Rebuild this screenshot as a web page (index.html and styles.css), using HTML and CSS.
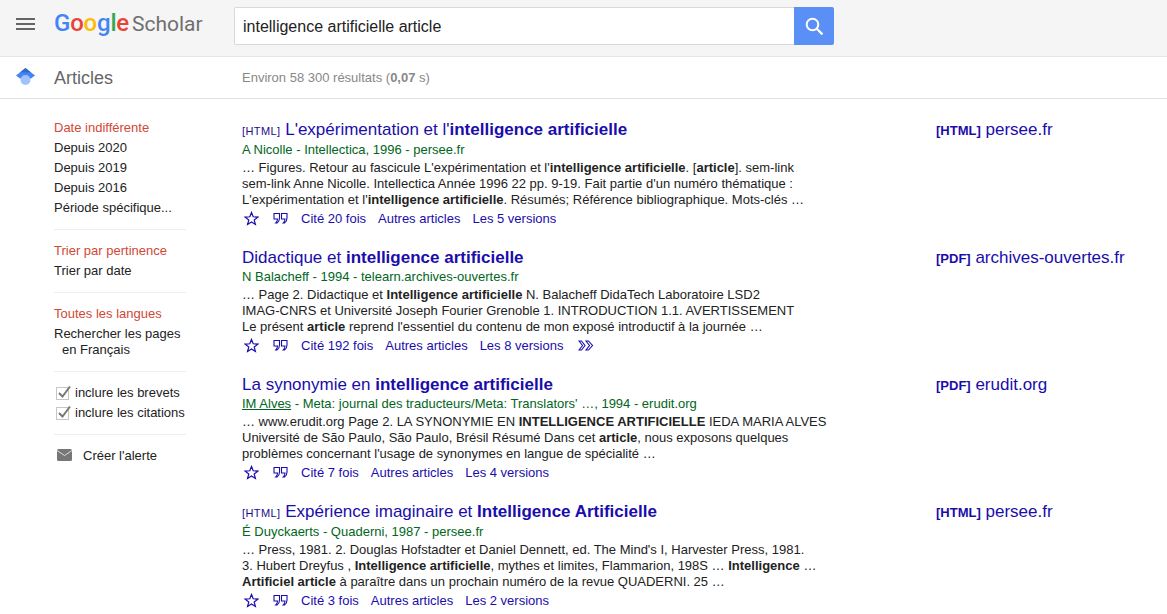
FILE: index.html
```html
<!DOCTYPE html>
<html lang="fr">
<head>
<meta charset="utf-8">
<title>Google Scholar</title>
<link rel="stylesheet" href="styles.css">
</head>
<body>
<header class="topbar">
  <div class="burger"><span></span><span></span><span></span></div>
  <div class="logo"><span class="logo-g"><span class="c-b">G</span><span class="c-r">o</span><span class="c-y">o</span><span class="c-b">g</span><span class="c-g">l</span><span class="c-r">e</span></span><span class="logo-s">Scholar</span></div>
  <form class="search">
    <input class="search-input" type="text" value="intelligence artificielle article">
    <button class="search-btn" type="button" aria-label="Rechercher">
      <svg width="21" height="21" viewBox="0 0 21 21"><circle cx="8.500" cy="8.500" r="5.800" fill="none" stroke="#fff" stroke-width="2"/><path d="M12.800 12.800l5.600 5.600" stroke="#fff" stroke-width="2.200" fill="none"/></svg>
    </button>
  </form>
</header>
<div class="subbar">
  <svg class="cap" width="19" height="20" viewBox="0 0 19 20"><path d="M9.500 1L19 8.500l-4 3H4l-4-3z" fill="#4285f4"/><path d="M9.500 1l5.500 4.500H4z" fill="#356ac3"/><circle cx="9.500" cy="13" r="5" fill="#a1c2fa"/></svg>
  <div class="sub-title">Articles</div>
  <div class="stats">Environ 58 300 résultats (<b>0,07</b> s)</div>
</div>
<main class="page">
  <nav class="side">
    <ul class="group">
      <li class="sel">Date indifférente</li><li>Depuis 2020</li><li>Depuis 2019</li><li>Depuis 2016</li><li>Période spécifique...</li>
    </ul>
    <ul class="group">
      <li class="sel">Trier par pertinence</li><li>Trier par date</li>
    </ul>
    <ul class="group">
      <li class="sel">Toutes les langues</li><li class="wrap">Rechercher les pages<br><span class="indent">en Français</span></li>
    </ul>
    <ul class="group checks">
      <li><span class="box"><svg width="16" height="16" viewBox="0 0 16 16"><path d="M3 8l3.500 3.500L14 1.500" fill="none" stroke="#777" stroke-width="2"/></svg></span>inclure les brevets</li>
      <li><span class="box"><svg width="16" height="16" viewBox="0 0 16 16"><path d="M3 8l3.500 3.500L14 1.500" fill="none" stroke="#777" stroke-width="2"/></svg></span>inclure les citations</li>
    </ul>
    <div class="alert"><svg width="15" height="12" viewBox="0 0 15 12"><rect width="15" height="12" rx="1.500" fill="#777"/><path d="M0 1.500l7.500 5 7.500-5" fill="none" stroke="#ddd" stroke-width="1"/></svg>Créer l'alerte</div>
  </nav>
  <section class="results">
    <article class="row">
      <div class="res">
        <h3 class="t"><span class="tag">[HTML]</span> <a>L'expérimentation et l'<b>intelligence artificielle</b></a></h3>
        <div class="meta">A Nicolle - Intellectica, 1996 - persee.fr</div>
        <div class="snip">… Figures. Retour au fascicule L'expérimentation et l'<b>intelligence artificielle</b>. [<b>article</b>]. sem-link<br>sem-link Anne Nicolle. Intellectica Année 1996 22 pp. 9-19. Fait partie d'un numéro thématique :<br>L'expérimentation et l'<b>intelligence artificielle</b>. Résumés; Référence bibliographique. Mots-clés …</div>
        <div class="acts">
          <svg class="star" width="15" height="15" viewBox="0 0 15 15"><path d="M7.500 1.500l1.700 4.300 4.600.3-3.600 2.900 1.200 4.500-3.900-2.500-3.900 2.500 1.200-4.500L1.200 6.100l4.600-.3z" fill="none" stroke="#1a0dab" stroke-width="1.200"/></svg>
          <svg class="quote" width="15" height="13" viewBox="0 0 15 13"><path d="M1 1.500h5.500v4.500c0 2-1 4-2.500 5H2.800c1-1 1.700-2.500 1.700-4H1zM8.500 1.500H14v4.500c0 2-1 4-2.500 5h-1.200c1-1 1.700-2.500 1.700-4H8.500z" fill="none" stroke="#1a0dab" stroke-width="1.100"/></svg>
          <a>Cité 20 fois</a><a>Autres articles</a><a>Les 5 versions</a>
        </div>
      </div>
      <div class="ggs"><span class="tag2">[HTML]</span> persee.fr</div>
    </article>
    <article class="row">
      <div class="res">
        <h3 class="t"><a>Didactique et <b>intelligence artificielle</b></a></h3>
        <div class="meta">N Balacheff - 1994 - telearn.archives-ouvertes.fr</div>
        <div class="snip">… Page 2. Didactique et <b>Intelligence artificielle</b> N. Balacheff DidaTech Laboratoire LSD2<br>IMAG-CNRS et Université Joseph Fourier Grenoble 1. INTRODUCTION 1.1. AVERTISSEMENT<br>Le présent <b>article</b> reprend l'essentiel du contenu de mon exposé introductif à la journée …</div>
        <div class="acts">
          <svg class="star" width="15" height="15" viewBox="0 0 15 15"><path d="M7.500 1.500l1.700 4.300 4.600.3-3.600 2.900 1.200 4.500-3.900-2.500-3.900 2.500 1.200-4.500L1.200 6.100l4.600-.3z" fill="none" stroke="#1a0dab" stroke-width="1.200"/></svg>
          <svg class="quote" width="15" height="13" viewBox="0 0 15 13"><path d="M1 1.500h5.500v4.500c0 2-1 4-2.500 5H2.800c1-1 1.700-2.500 1.700-4H1zM8.500 1.500H14v4.500c0 2-1 4-2.500 5h-1.200c1-1 1.700-2.500 1.700-4H8.500z" fill="none" stroke="#1a0dab" stroke-width="1.100"/></svg>
          <a>Cité 192 fois</a><a>Autres articles</a><a>Les 8 versions</a>
          <svg class="more" width="16" height="11" viewBox="0 0 16 11"><path d="M1 1h2.500l3.500 4.500L3.500 10H1l3.500-4.500zM8 1h2.500l4 4.500-4 4.500H8l3.500-4.500z" fill="none" stroke="#1a0dab" stroke-width="1.100"/></svg>
        </div>
      </div>
      <div class="ggs"><span class="tag2">[PDF]</span> archives-ouvertes.fr</div>
    </article>
    <article class="row">
      <div class="res">
        <h3 class="t"><a>La synonymie en <b>intelligence artificielle</b></a></h3>
        <div class="meta"><u>IM Alves</u> - Meta: journal des traducteurs/Meta: Translators' …, 1994 - erudit.org</div>
        <div class="snip">… www.erudit.org Page 2. LA SYNONYMIE EN <b>INTELLIGENCE ARTIFICIELLE</b> IEDA MARIA ALVES<br>Université de São Paulo, São Paulo, Brésil Résumé Dans cet <b>article</b>, nous exposons quelques<br>problèmes concernant l'usage de synonymes en langue de spécialité …</div>
        <div class="acts">
          <svg class="star" width="15" height="15" viewBox="0 0 15 15"><path d="M7.500 1.500l1.700 4.300 4.600.3-3.600 2.900 1.200 4.500-3.900-2.500-3.900 2.500 1.200-4.500L1.200 6.100l4.600-.3z" fill="none" stroke="#1a0dab" stroke-width="1.200"/></svg>
          <svg class="quote" width="15" height="13" viewBox="0 0 15 13"><path d="M1 1.500h5.500v4.500c0 2-1 4-2.500 5H2.800c1-1 1.700-2.500 1.700-4H1zM8.500 1.500H14v4.500c0 2-1 4-2.500 5h-1.200c1-1 1.700-2.500 1.700-4H8.500z" fill="none" stroke="#1a0dab" stroke-width="1.100"/></svg>
          <a>Cité 7 fois</a><a>Autres articles</a><a>Les 4 versions</a>
        </div>
      </div>
      <div class="ggs"><span class="tag2">[PDF]</span> erudit.org</div>
    </article>
    <article class="row">
      <div class="res">
        <h3 class="t"><span class="tag">[HTML]</span> <a>Expérience imaginaire et <b>Intelligence Artificielle</b></a></h3>
        <div class="meta">É Duyckaerts - Quaderni, 1987 - persee.fr</div>
        <div class="snip">… Press, 1981. 2. Douglas Hofstadter et Daniel Dennett, ed. The Mind's I, Harvester Press, 1981.<br>3. Hubert Dreyfus , <b>Intelligence artificielle</b>, mythes et limites, Flammarion, 198S … <b>Intelligence</b> …<br><b>Artificiel article</b> à paraître dans un prochain numéro de la revue QUADERNI. 25 …</div>
        <div class="acts">
          <svg class="star" width="15" height="15" viewBox="0 0 15 15"><path d="M7.500 1.500l1.700 4.300 4.600.3-3.600 2.900 1.200 4.500-3.900-2.500-3.900 2.500 1.200-4.500L1.200 6.100l4.600-.3z" fill="none" stroke="#1a0dab" stroke-width="1.200"/></svg>
          <svg class="quote" width="15" height="13" viewBox="0 0 15 13"><path d="M1 1.500h5.500v4.500c0 2-1 4-2.500 5H2.800c1-1 1.700-2.500 1.700-4H1zM8.500 1.500H14v4.500c0 2-1 4-2.500 5h-1.200c1-1 1.700-2.500 1.700-4H8.500z" fill="none" stroke="#1a0dab" stroke-width="1.100"/></svg>
          <a>Cité 3 fois</a><a>Autres articles</a><a>Les 2 versions</a>
        </div>
      </div>
      <div class="ggs"><span class="tag2">[HTML]</span> persee.fr</div>
    </article>
  </section>
</main>
</body>
</html>
```
FILE: styles.css
```css
* { box-sizing: border-box; }
html, body { margin: 0; padding: 0; height: 100%; overflow: hidden; }
body { font-family: "Liberation Sans", Arial, sans-serif; font-size: 13px; color: #222; background: #fff; }
.topbar { height: 57px; background: #f5f5f5; border-bottom: 1px solid #e5e5e5; display: flex; align-items: center; padding-left: 16px; }
.burger { width: 19px; display: flex; flex-direction: column; gap: 3px; margin-top: -8px; }
.burger span { display: block; height: 2px; background: #666; }
.logo { margin-left: 19px; width: 180px; display: flex; align-items: baseline; margin-top: -10px; white-space: nowrap; }
.logo-g { font-family: Roboto, sans-serif; font-size: 24px; font-weight: 500; letter-spacing: -.2px; }
.logo-s { font-family: Roboto, sans-serif; font-size: 21px; color: #6f6f6f; margin-left: 3px; }
.c-b { color: #4285f4; } .c-r { color: #ea4335; } .c-y { color: #fbbc05; } .c-g { color: #34a853; }
.search { display: flex; height: 38px; width: 600px; margin-top: -4px; }
.search-input { width: 560px; height: 38px; border: 1px solid #d9d9d9; border-right: 0; border-radius: 2px 0 0 2px; padding: 2px 8px 0; font: 16px "Liberation Sans", Arial, sans-serif; color: #222; outline: 0; background: #fff; }
.search-btn { width: 40px; height: 38px; border: 0; border-radius: 0 2px 2px 0; background: #5a8ff5; padding: 0; display: flex; align-items: center; justify-content: center; }
.subbar { height: 42px; border-bottom: 1px solid #e0e0e0; display: flex; align-items: center; padding-left: 16px; }
.cap { flex: none; margin-top: -2px; }
.sub-title { margin-left: 19px; width: 188px; font-size: 18px; color: #666; padding-top: 1px; }
.stats { font-size: 13px; color: #888; }
.page { display: flex; padding: 18px 0 0 54px; }
.side { width: 132px; flex: none; }
.group { list-style: none; margin: 0 0 10px; padding: 1px 0 11px; border-bottom: 1px solid #eee; font-size: 13px; }
.group li { line-height: 20px; color: #222; white-space: nowrap; }
.group .sel { color: #d14836; }
.group .wrap { line-height: 16px; padding: 2px 0; }
.indent { margin-left: 8px; }
.checks li { display: flex; align-items: center; }
.box { width: 13px; height: 13px; border: 1px solid #c6c6c6; margin: 0 6px 0 2px; flex: none; position: relative; }
.box svg { position: absolute; left: -1px; top: -3px; }
.alert { display: flex; align-items: center; gap: 11px; height: 20px; margin-left: 3px; color: #222; }
.results { margin-left: 56px; flex: none; width: 880px; margin-top: 3px; }
.row { display: flex; height: 127px; }
.row:first-child { height: 128px; }
.res { width: 694px; flex: none; }
.t { margin: 0; font-size: 17px; font-weight: 400; line-height: 20px; color: #1a0dab; white-space: nowrap; }
.tag { font-size: 11px; letter-spacing: .4px; color: #1a0d8b; }
.t a { color: #1a0dab; }
.meta { font-size: 13px; line-height: 17px; margin-bottom: 2px; color: #006621; white-space: nowrap; }
.snip { font-size: 13px; line-height: 16px; color: #222; white-space: nowrap; }
.acts { display: flex; align-items: center; height: 20px; font-size: 13px; color: #1a0dab; white-space: nowrap; }
.acts a { margin-right: 12px; }
.star { margin-left: 2px; margin-right: 14px; }
.quote { margin-right: 13px; }
.more { margin-left: 3px; }
.ggs { font-size: 17px; line-height: 20px; color: #1a0dab; white-space: nowrap; }
.tag2 { font-size: 13px; font-weight: 700; }
```
